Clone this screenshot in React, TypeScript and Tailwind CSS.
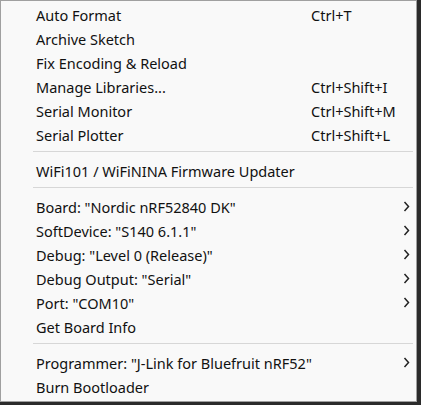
import React from 'react';

type Item =
  | { kind: 'item'; label: string; shortcut?: string; sub?: boolean }
  | { kind: 'sep' };

const items: Item[] = [
  { kind: 'item', label: 'Auto Format', shortcut: 'Ctrl+T' },
  { kind: 'item', label: 'Archive Sketch' },
  { kind: 'item', label: 'Fix Encoding & Reload' },
  { kind: 'item', label: 'Manage Libraries...', shortcut: 'Ctrl+Shift+I' },
  { kind: 'item', label: 'Serial Monitor', shortcut: 'Ctrl+Shift+M' },
  { kind: 'item', label: 'Serial Plotter', shortcut: 'Ctrl+Shift+L' },
  { kind: 'sep' },
  { kind: 'item', label: 'WiFi101 / WiFiNINA Firmware Updater' },
  { kind: 'sep' },
  { kind: 'item', label: 'Board: "Nordic nRF52840 DK"', sub: true },
  { kind: 'item', label: 'SoftDevice: "S140 6.1.1"', sub: true },
  { kind: 'item', label: 'Debug: "Level 0 (Release)"', sub: true },
  { kind: 'item', label: 'Debug Output: "Serial"', sub: true },
  { kind: 'item', label: 'Port: "COM10"', sub: true },
  { kind: 'item', label: 'Get Board Info' },
  { kind: 'sep' },
  { kind: 'item', label: 'Programmer: "J-Link for Bluefruit nRF52"', sub: true },
  { kind: 'item', label: 'Burn Bootloader' },
];

const Chevron = () => (
  <svg width="7" height="11" viewBox="0 0 7 11" fill="none">
    <path d="M1.5 1 L5.5 5.5 L1.5 10" stroke="#222" strokeWidth="1.5" />
  </svg>
);

export default function App() {
  return (
    <div className="w-[421px] h-[405px] bg-[#2b2b2b] overflow-hidden">
      <div
        className="w-[417px] h-[402px] bg-[#f9f9f9] border border-[#a0a0a0] pt-[2px] text-[14.5px] text-[#111]"
        style={{ fontFamily: '"Noto Sans", "Open Sans", sans-serif' }}
      >
        {items.map((it, i) =>
          it.kind === 'sep' ? (
            <div key={i} className="h-[12px] pt-[4px] pl-[32px] pr-[3px]">
              <div className="h-px bg-[#d7d7d7]" />
            </div>
          ) : (
            <div key={i} className="h-[24px] flex items-center pl-[35px] relative">
              <span className="leading-none">{it.label}</span>
              {it.shortcut && (
                <span className="absolute left-[310px] leading-none">{it.shortcut}</span>
              )}
              {it.sub && (
                <span className="absolute left-[402px] top-[6px]">
                  <Chevron />
                </span>
              )}
            </div>
          )
        )}
      </div>
    </div>
  );
}
